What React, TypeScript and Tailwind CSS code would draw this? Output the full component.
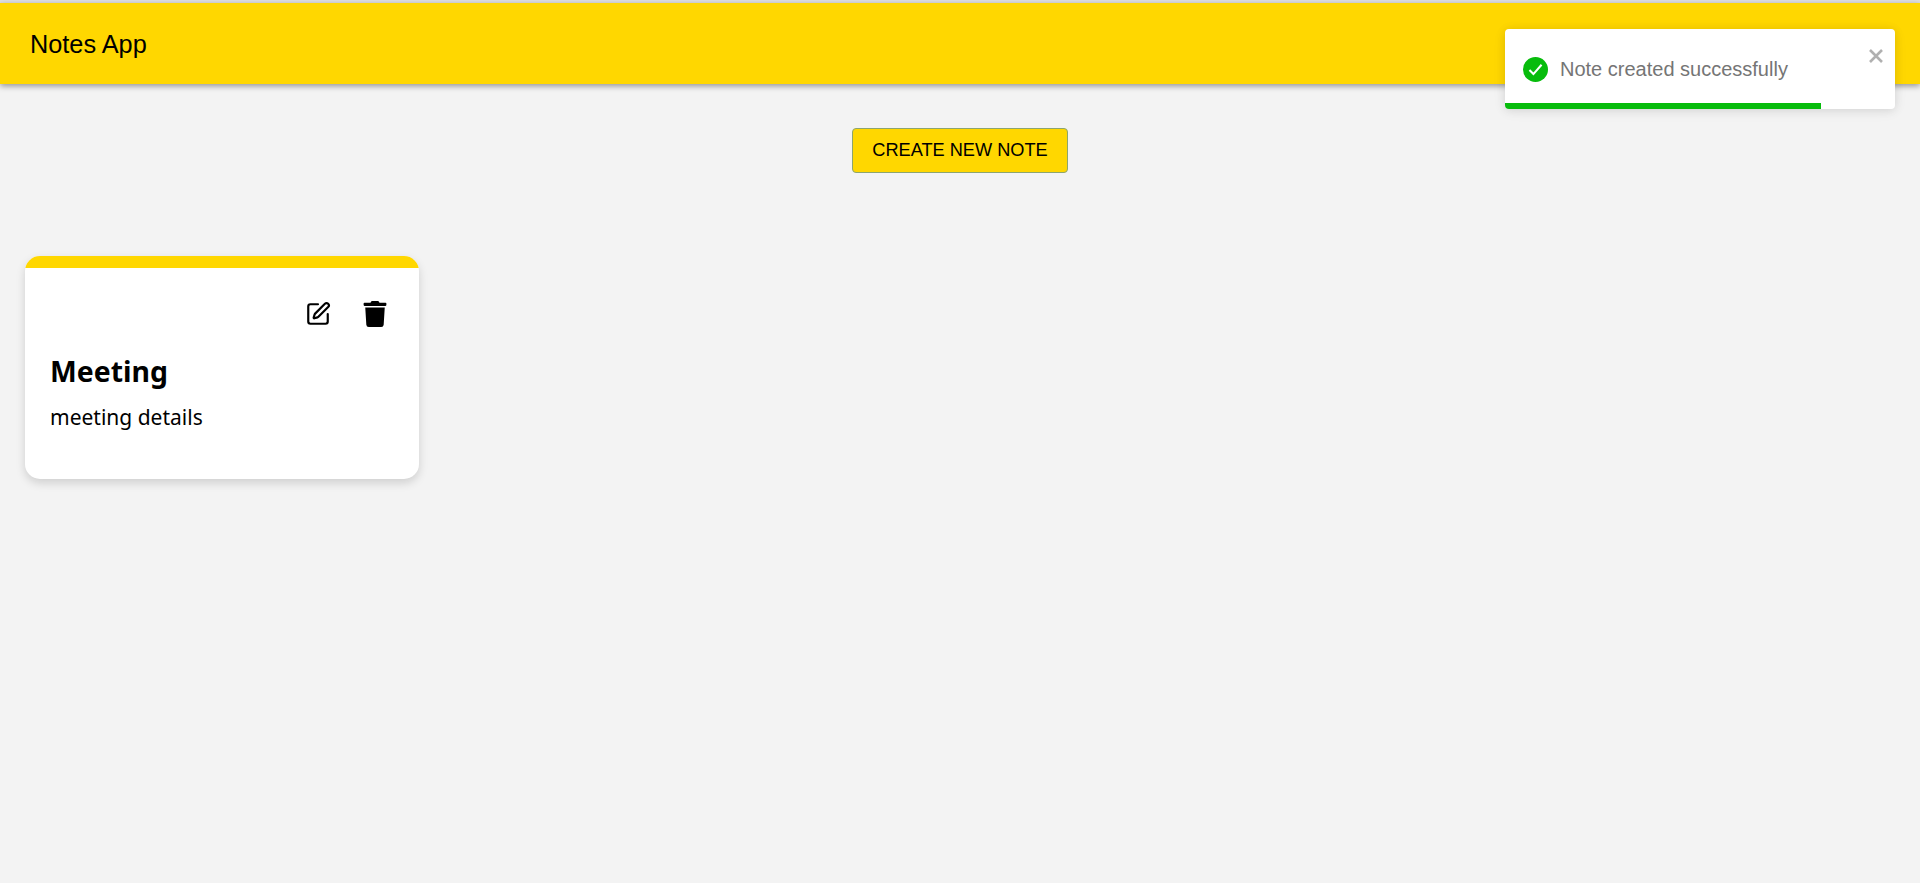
import { FaTrash } from "react-icons/fa"
import { SquarePen } from "lucide-react"

const sans = "font-['Liberation_Sans',Arial,sans-serif]"

const Toast = () => {
  return (
    <div className={`absolute top-[29px] right-[25px] w-[390px] h-[80px] bg-white rounded overflow-hidden shadow-[0_1px_10px_0_rgba(0,0,0,0.1),0_2px_15px_0_rgba(0,0,0,0.05)] ${sans}`}>
      <div className="flex items-center h-[74px] pl-[18px] pt-[6px]">
        <svg viewBox="0 0 24 24" className="w-[25px] h-[25px] mr-[12px]">
          <circle cx="12" cy="12" r="12" fill="#07bc0c" />
          <path d="M6.2 12.5l3.8 3.9 7.8-9" fill="none" stroke="#fff" strokeWidth="2" />
        </svg>
        <span className="text-[#757575] text-[20px]">Note created successfully</span>
      </div>
      <svg viewBox="0 0 14 16" className="absolute top-[19px] right-[12px] w-[14px] h-[16px]">
        <path d="M1 2l12 12M13 2L1 14" stroke="#b0b0b0" strokeWidth="2.6" fill="none" />
      </svg>
      <div className="absolute left-0 bottom-0 w-[316px] h-[6px] bg-[#07bc0c]" />
    </div>
  )
}

const NoteCard = () => {
  return (
    <div className="w-[394px] h-[223px] bg-white rounded-[15px] overflow-hidden shadow-[0_4px_10px_rgba(0,0,0,0.15)] font-['Noto_Sans',sans-serif]">
      <div className="h-[12px] bg-[#ffd700]" />
      <div className="flex justify-end items-center gap-[31px] pt-[33px] pr-[31px] text-black">
        <SquarePen size={26} strokeWidth={2} />
        <FaTrash size={26} />
      </div>
      <h2 className="mt-[24px] pl-[25px] text-[28.4px] font-bold leading-[40px] text-black">Meeting</h2>
      <p className="mt-[12px] pl-[25px] text-[21px] leading-[29px] text-black">meeting details</p>
    </div>
  )
}

const App = () => {
  return (
    <div className="relative min-h-[883px] bg-[#f3f3f3]">
      <div className="h-[3px] bg-[#e0e0e0]" />
      <header className={`h-[81px] flex items-center pl-[30px] bg-[#ffd700] shadow-[0_2px_6px_rgba(0,0,0,0.4)] ${sans}`}>
        <span className="text-[25.3px] pt-[3px] text-black">Notes App</span>
      </header>

      <Toast />

      <div className="flex justify-center mt-[44px]">
        <button className={`w-[216px] h-[45px] rounded bg-[#ffd700] border border-[#8ca56f] text-[18.2px] text-black ${sans}`}>
          CREATE NEW NOTE
        </button>
      </div>

      <div className="mt-[83px] pl-[25px]">
        <NoteCard />
      </div>
    </div>
  )
}

export default App
